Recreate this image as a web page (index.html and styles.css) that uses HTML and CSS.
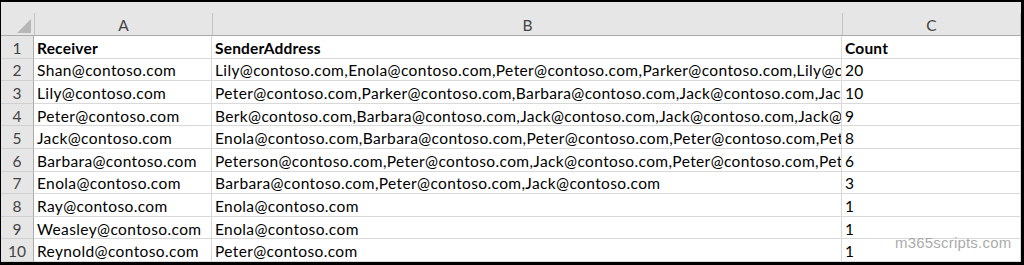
FILE: index.html
```html
<!DOCTYPE html>
<html>
<head>
<meta charset="utf-8">
<link rel="stylesheet" href="styles.css">
</head>
<body>
<div class="frame">
  <div class="sheet">
    <div class="corner"><svg class="tri" width="16" height="16" viewBox="0 0 16 16"><polygon points="1,15 15,1 15,15" fill="#b7b7b7"/></svg></div>
    <div class="colhead"><div class="col-label">A</div></div>
    <div class="colhead"><div class="col-label">B</div></div>
    <div class="colhead last"><div class="col-label">C</div></div>

    <div class="rowhead">1</div><div class="cell bold">Receiver</div><div class="cell bold">SenderAddress</div><div class="cell bold">Count</div>
    <div class="rowhead">2</div><div class="cell">Shan@contoso.com</div><div class="cell">Lily@contoso.com,Enola@contoso.com,Peter@contoso.com,Parker@contoso.com,Lily@contoso.com,Jack@contoso.com</div><div class="cell">20</div>
    <div class="rowhead">3</div><div class="cell">Lily@contoso.com</div><div class="cell">Peter@contoso.com,Parker@contoso.com,Barbara@contoso.com,Jack@contoso.com,Jack@contoso.com,Jack@contoso.com</div><div class="cell">10</div>
    <div class="rowhead">4</div><div class="cell">Peter@contoso.com</div><div class="cell">Berk@contoso.com,Barbara@contoso.com,Jack@contoso.com,Jack@contoso.com,Jack@contoso.com,Jack@contoso.com</div><div class="cell">9</div>
    <div class="rowhead">5</div><div class="cell">Jack@contoso.com</div><div class="cell">Enola@contoso.com,Barbara@contoso.com,Peter@contoso.com,Peter@contoso.com,Peter@contoso.com,Peter@contoso.com</div><div class="cell">8</div>
    <div class="rowhead">6</div><div class="cell">Barbara@contoso.com</div><div class="cell">Peterson@contoso.com,Peter@contoso.com,Jack@contoso.com,Peter@contoso.com,Peter@contoso.com,Jack@contoso.com</div><div class="cell">6</div>
    <div class="rowhead">7</div><div class="cell">Enola@contoso.com</div><div class="cell">Barbara@contoso.com,Peter@contoso.com,Jack@contoso.com</div><div class="cell">3</div>
    <div class="rowhead">8</div><div class="cell">Ray@contoso.com</div><div class="cell">Enola@contoso.com</div><div class="cell">1</div>
    <div class="rowhead">9</div><div class="cell">Weasley@contoso.com</div><div class="cell">Enola@contoso.com</div><div class="cell">1</div>
    <div class="rowhead">10</div><div class="cell">Reynold@contoso.com</div><div class="cell">Peter@contoso.com</div><div class="cell">1</div>
  </div>
  <div class="watermark">m365scripts.com</div>
</div>
</body>
</html>
```

FILE: styles.css
```css
html, body {
  margin: 0;
  padding: 0;
  background: #ffffff;
}

.frame {
  position: relative;
  width: 1024px;
  height: 265px;
  box-sizing: border-box;
  border-style: solid;
  border-color: #000000;
  border-width: 2px 3px 3px 1px;
  overflow: hidden;
}

.sheet {
  display: grid;
  grid-template-columns: 33px 178px 630px 179px;
  grid-template-rows: 34px repeat(10, 22.6px);
  font-family: Lato, "Liberation Sans", sans-serif;
  font-size: 15.5px;
  letter-spacing: 0.38px;
  color: #000000;
}

.corner {
  background: #e6e6e6;
  box-sizing: border-box;
  border-bottom: 1px solid #ababab;
  padding-top: 11px;
  display: flex;
}

.corner .tri {
  margin-left: 15px;
  margin-top: 5px;
}

.colhead {
  background: #e6e6e6;
  box-sizing: border-box;
  border-bottom: 1px solid #ababab;
  padding-top: 11px;
  display: flex;
}

.col-label {
  flex: 1;
  display: flex;
  align-items: center;
  justify-content: center;
  color: #444444;
  border-left: 1px solid #c4c4c4;
  padding-top: 1px;
  letter-spacing: 0;
}

.colhead.last .col-label {
  border-right: 1px solid #c4c4c4;
}

.rowhead {
  background: #e6e6e6;
  box-sizing: border-box;
  border-right: 1px solid #ababab;
  border-bottom: 1px solid #d0d0d0;
  display: flex;
  align-items: center;
  justify-content: center;
  color: #444444;
  padding-top: 2px;
  letter-spacing: 0;
}

.cell {
  box-sizing: border-box;
  border-right: 1px solid #d9d9d9;
  border-bottom: 1px solid #d9d9d9;
  white-space: nowrap;
  overflow: hidden;
  padding: 2px 0 0 3px;
  display: flex;
  align-items: center;
}

.bold {
  font-weight: 700;
  letter-spacing: 0.2px;
}

.watermark {
  position: absolute;
  left: 894px;
  top: 232px;
  font-family: "Liberation Sans", Arial, sans-serif;
  font-size: 15px;
  color: rgba(140, 140, 140, 0.75);
  letter-spacing: 0.2px;
}
```
